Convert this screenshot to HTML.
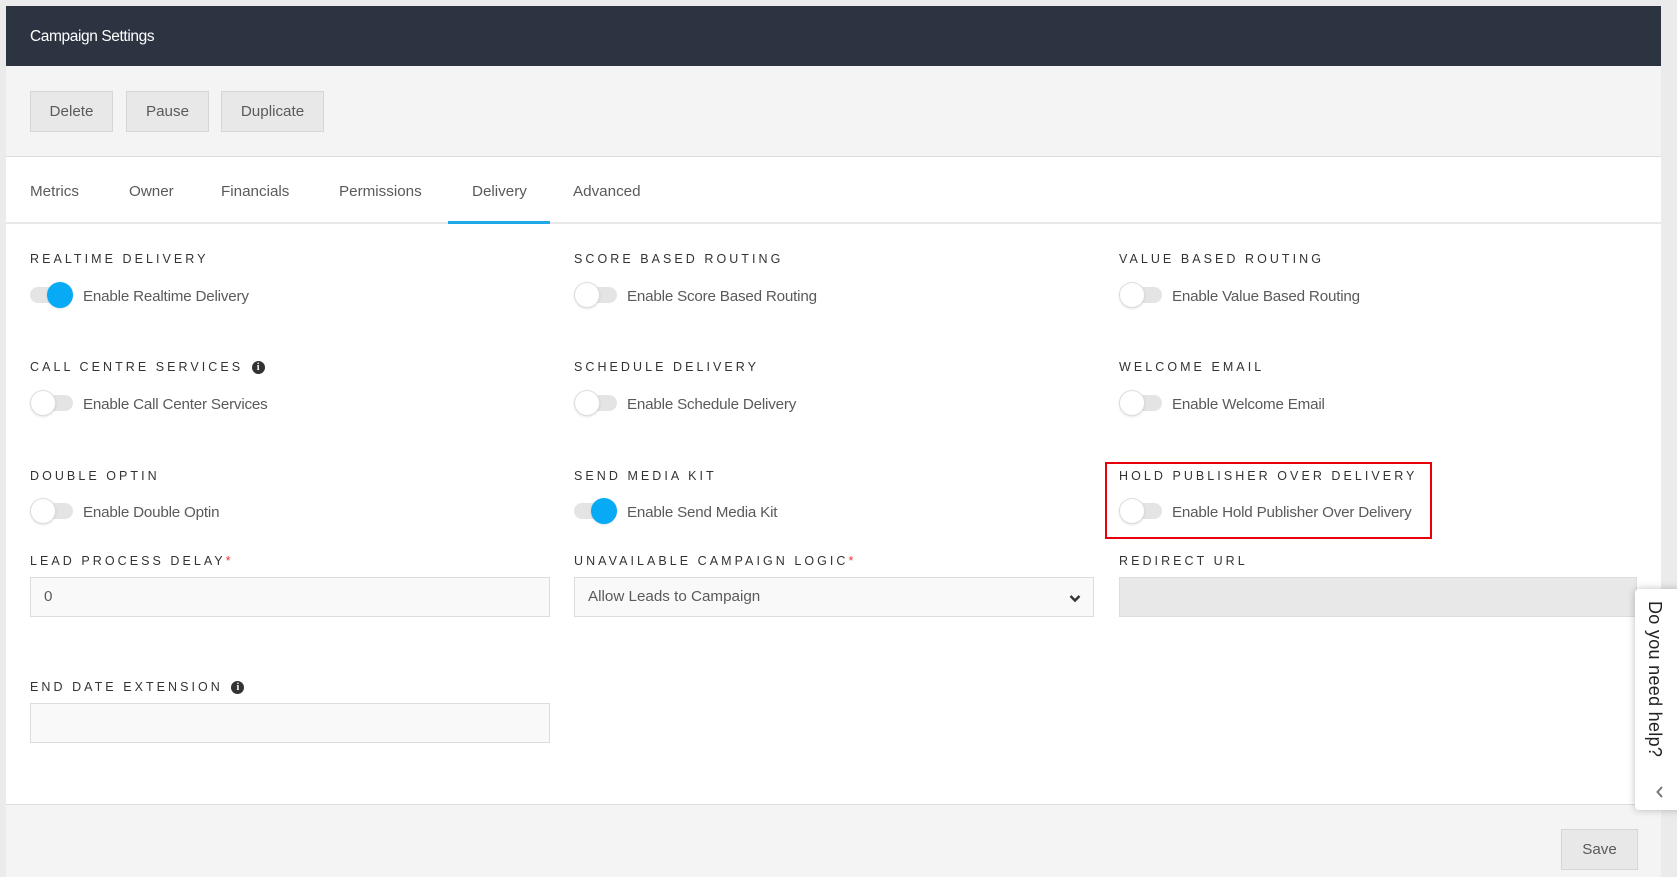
<!DOCTYPE html>
<html><head><style>
*{box-sizing:border-box;margin:0;padding:0}
body{width:1677px;height:877px;background:#ebebeb;font-family:"Liberation Sans",sans-serif;position:relative;overflow:hidden;color:#555}
.hdr{position:absolute;left:6px;top:6px;width:1655px;height:60px;background:#2c3441;color:#fff;font-size:15.5px;line-height:62px;padding-left:24px;letter-spacing:-0.4px}
.tool{position:absolute;left:6px;top:66px;width:1655px;height:91px;background:#f4f4f4;border-bottom:1px solid #ddd}
.btn{position:absolute;top:25px;height:41px;background:#e8e8e8;border:1px solid #d6d6d6;font-size:15.2px;color:#5a5a5a;text-align:center;line-height:39px}
.main{position:absolute;left:6px;top:157px;width:1655px;height:647px;background:#fff}
.tabs{position:absolute;left:0;top:0;width:1655px;height:67px;border-bottom:2px solid #e8e8e8}
.tab{position:absolute;top:26px;font-size:15.2px;color:#5a5a5a}
.ul{position:absolute;left:442px;top:64px;width:102px;height:3px;background:#1fa8e8}
.lbl{position:absolute;font-size:12.5px;letter-spacing:3.05px;color:#333;font-weight:normal}
.tg{position:absolute;width:43px;height:26px}
.tg .tr{position:absolute;left:0;top:5px;width:43px;height:16px;border-radius:8px;background:#e4e4e4}
.tg .kn{position:absolute;top:0;width:26px;height:26px;border-radius:50%;background:#fff;border:1px solid #ddd;left:0;box-shadow:0 1px 2px rgba(0,0,0,.1)}
.tg.on .kn{left:17px;background:#06aaf5;border-color:#06aaf5}
.tt{position:absolute;font-size:15.2px;color:#5a5a5a;letter-spacing:-0.2px}
.inp{position:absolute;height:40px;background:#f9f9f9;border:1px solid #ddd;font-size:15.2px;color:#5a5a5a;padding-left:13px;line-height:38px}
.info{display:inline-block;width:13px;height:13px;border-radius:50%;background:#333;color:#fff;font-size:10px;line-height:13px;text-align:center;letter-spacing:0;font-weight:bold;font-family:"Liberation Serif",serif;vertical-align:1px;margin-left:2px}
.req{color:#e33;letter-spacing:0}
.foot{position:absolute;left:6px;top:804px;width:1655px;height:73px;background:#f4f4f4;border-top:1px solid #ddd}
</style></head><body>
<div class="hdr">Campaign Settings</div>
<div class="tool">
<div class="btn" style="left:24px;width:83px">Delete</div>
<div class="btn" style="left:120px;width:83px">Pause</div>
<div class="btn" style="left:215px;width:103px">Duplicate</div>
</div>
<div class="main">
<div class="tabs">
<span class="tab" style="left:24px">Metrics</span>
<span class="tab" style="left:123px">Owner</span>
<span class="tab" style="left:215px">Financials</span>
<span class="tab" style="left:333px">Permissions</span>
<span class="tab" style="left:466px">Delivery</span>
<span class="tab" style="left:567px">Advanced</span>
<div class="ul"></div>
</div>

<div class="lbl" style="left:24px;top:95px">REALTIME DELIVERY</div>
<div class="tg on" style="left:24px;top:125px"><div class="tr"></div><div class="kn"></div></div>
<div class="tt" style="left:77px;top:131px">Enable Realtime Delivery</div>
<div class="lbl" style="left:568px;top:95px">SCORE BASED ROUTING</div>
<div class="tg" style="left:568px;top:125px"><div class="tr"></div><div class="kn"></div></div>
<div class="tt" style="left:621px;top:131px">Enable Score Based Routing</div>
<div class="lbl" style="left:1113px;top:95px">VALUE BASED ROUTING</div>
<div class="tg" style="left:1113px;top:125px"><div class="tr"></div><div class="kn"></div></div>
<div class="tt" style="left:1166px;top:131px">Enable Value Based Routing</div>

<div class="lbl" style="left:24px;top:203px">CALL CENTRE SERVICES <span class="info">i</span></div>
<div class="tg" style="left:24px;top:233px"><div class="tr"></div><div class="kn"></div></div>
<div class="tt" style="left:77px;top:239px">Enable Call Center Services</div>
<div class="lbl" style="left:568px;top:203px">SCHEDULE DELIVERY</div>
<div class="tg" style="left:568px;top:233px"><div class="tr"></div><div class="kn"></div></div>
<div class="tt" style="left:621px;top:239px">Enable Schedule Delivery</div>
<div class="lbl" style="left:1113px;top:203px">WELCOME EMAIL</div>
<div class="tg" style="left:1113px;top:233px"><div class="tr"></div><div class="kn"></div></div>
<div class="tt" style="left:1166px;top:239px">Enable Welcome Email</div>

<div class="lbl" style="left:24px;top:312px">DOUBLE OPTIN</div>
<div class="tg" style="left:24px;top:341px"><div class="tr"></div><div class="kn"></div></div>
<div class="tt" style="left:77px;top:347px">Enable Double Optin</div>
<div class="lbl" style="left:568px;top:312px">SEND MEDIA KIT</div>
<div class="tg on" style="left:568px;top:341px"><div class="tr"></div><div class="kn"></div></div>
<div class="tt" style="left:621px;top:347px">Enable Send Media Kit</div>
<div style="position:absolute;left:1099px;top:305px;width:327px;height:77px;border:2px solid #e8000b"></div>
<div class="lbl" style="left:1113px;top:312px">HOLD PUBLISHER OVER DELIVERY</div>
<div class="tg" style="left:1113px;top:341px"><div class="tr"></div><div class="kn"></div></div>
<div class="tt" style="left:1166px;top:347px">Enable Hold Publisher Over Delivery</div>

<div class="lbl" style="left:24px;top:397px">LEAD PROCESS DELAY<span class="req">*</span></div>
<div class="inp" style="left:24px;top:420px;width:520px">0</div>
<div class="lbl" style="left:568px;top:397px">UNAVAILABLE CAMPAIGN LOGIC<span class="req">*</span></div>
<div class="inp" style="left:568px;top:420px;width:520px">Allow Leads to Campaign
<svg style="position:absolute;right:12px;top:16px" width="12" height="9" viewBox="0 0 12 9"><path d="M1.5 2 L6 6.5 L10.5 2" stroke="#333" stroke-width="2.4" fill="none"/></svg></div>
<div class="lbl" style="left:1113px;top:397px">REDIRECT URL</div>
<div class="inp" style="left:1113px;top:420px;width:518px;background:#e8e8e8"></div>

<div class="lbl" style="left:24px;top:523px">END DATE EXTENSION <span class="info">i</span></div>
<div class="inp" style="left:24px;top:546px;width:520px"></div>
</div>
<div class="foot">
<div class="btn" style="left:1555px;top:24px;width:77px;height:41px">Save</div>
</div>
<div style="position:absolute;left:1635px;top:589px;width:48px;height:221px;background:#fff;border-radius:4px 0 0 4px;box-shadow:0 0 8px rgba(0,0,0,.25)">
<div style="position:absolute;left:30px;top:12px;transform-origin:0 0;transform:rotate(90deg);white-space:nowrap;font-size:18px;color:#222;letter-spacing:0.3px">Do you need help?</div>
<svg style="position:absolute;left:20px;top:196px" width="10" height="14" viewBox="0 0 10 14"><path d="M7 2 L2.5 7 L7 12" stroke="#777" stroke-width="2" fill="none"/></svg>
</div>
</body></html>
